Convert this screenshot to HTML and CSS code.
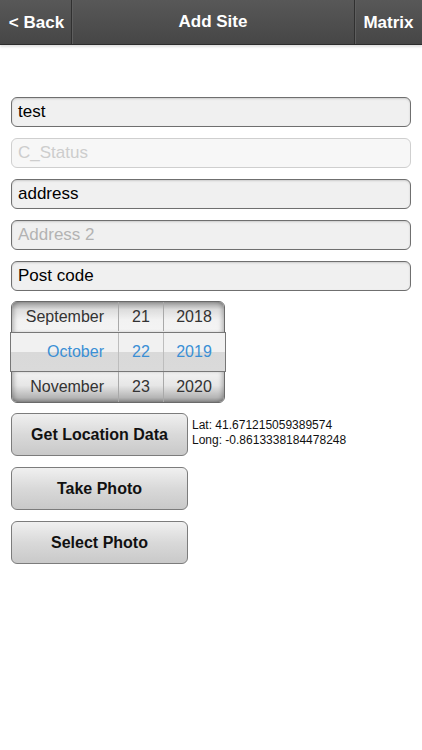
FILE: index.html
```html
<!DOCTYPE html>
<html lang="en">

<head>
    <meta charset="UTF-8">
    <meta name="viewport" content="width=device-width, initial-scale=1.0">
    <title>Add Site</title>
    <link rel="stylesheet" href="styles.css">
</head>

<body>
    <header class="topbar">
        <div class="bar_btn back">&lt; Back</div>
        <div class="bar_title">Add Site</div>
        <div class="bar_btn matrix">Matrix</div>
    </header>

    <div class="form">
        <div class="field">test</div>
        <div class="field disabled">C_Status</div>
        <div class="field">address</div>
        <div class="field placeholder">Address 2</div>
        <div class="field">Post code</div>

        <!-- Date Picker -->
        <div class="picker">
            <div class="prow top">
                <div class="cell month">September</div>
                <div class="cell">21</div>
                <div class="cell">2018</div>
            </div>
            <div class="prow selected">
                <div class="cell month">October</div>
                <div class="cell">22</div>
                <div class="cell">2019</div>
            </div>
            <div class="prow bottom">
                <div class="cell month">November</div>
                <div class="cell">23</div>
                <div class="cell">2020</div>
            </div>
        </div>

        <div class="loc_row">
            <button class="btn">Get Location Data</button>
            <div class="coords">
                Lat: 41.671215059389574<br>
                Long: -0.8613338184478248
            </div>
        </div>
        <button class="btn">Take Photo</button>
        <button class="btn">Select Photo</button>
    </div>
</body>

</html>
```

FILE: styles.css
```css
/* Global Styles */
body {
    font-family: 'Liberation Sans', Arial, sans-serif;
    margin: 0;
    padding: 0;
    background: #fff;
    color: #000;
}

/* Top Bar */
.topbar {
    display: flex;
    height: 44px;
    background: linear-gradient(#585858, #464646);
    border-bottom: 1px solid #2c2c2c;
    box-shadow: 0 2px 2px rgba(0, 0, 0, 0.12);
    color: white;
    font-weight: bold;
    font-size: 17px;
}

.bar_btn {
    display: flex;
    align-items: center;
    justify-content: center;
    padding-top: 2px;
}

.back {
    width: 72px;
    padding-left: 2px;
    box-sizing: border-box;
    border-right: 1px solid #303030;
    box-shadow: 1px 0 0 #5e5e5e;
}

.matrix {
    width: 67px;
    border-left: 1px solid #303030;
    box-shadow: inset 1px 0 0 #5e5e5e;
}

.bar_title {
    flex: 1;
    text-align: center;
    padding-top: 12px;
}

/* Form */
.form {
    display: flex;
    flex-direction: column;
    align-items: flex-start;
    gap: 11px;
    padding: 52px 11px 0;
}

.field {
    box-sizing: border-box;
    width: 400px;
    height: 30px;
    line-height: 28px;
    padding: 0 6px;
    border: 1px solid #6f6f6f;
    border-radius: 6px;
    background: #f0f0f0;
    box-shadow: inset 0 1px 2px rgba(0, 0, 0, 0.15);
    font-size: 17px;
}

.field.disabled {
    border-color: #cfcfcf;
    background: #f7f7f7;
    color: #cdcdcd;
    box-shadow: none;
}

.field.placeholder {
    color: #b3b3b3;
}

/* Date Picker */
.picker {
    box-sizing: border-box;
    width: 214px;
    margin-top: -1px;
    border: 1px solid #6a6a6a;
    border-radius: 6px;
    font-size: 16px;
    color: #333;
}

.prow {
    display: grid;
    grid-template-columns: 106px 45px 61px;
}

.prow .cell {
    display: flex;
    align-items: center;
    justify-content: center;
    border-left: 1px solid #a9a9a9;
}

.prow .cell:first-child {
    border-left: none;
}

.prow .month {
    justify-content: flex-end;
    padding-right: 14px;
}

.top {
    height: 30px;
    padding-bottom: 1px;
    box-sizing: border-box;
    border-radius: 5px 5px 0 0;
    background: linear-gradient(#9a9a9a, #dcdcdc 25%, #f2f2f2 60%, #f4f4f4);
    box-shadow: inset 4px 0 4px -2px rgba(0, 0, 0, 0.25), inset -4px 0 4px -2px rgba(0, 0, 0, 0.25);
}

.bottom {
    height: 30px;
    border-radius: 0 0 5px 5px;
    background: linear-gradient(#f2f2f2, #e6e6e6 45%, #b5b5b5 85%, #8c8c8c);
    box-shadow: inset 4px 0 4px -2px rgba(0, 0, 0, 0.25), inset -4px 0 4px -2px rgba(0, 0, 0, 0.25);
}

.selected {
    height: 38px;
    margin: 0 -2px;
    padding: 0 1px;
    border: 1px solid #777;
    background: linear-gradient(#f1f1f1 50%, #d9d9d9 50%, #dadada);
    color: #3a8fd5;
}

.selected .cell {
    border-left-color: #bdbdbd;
}

/* Buttons */
.btn {
    box-sizing: border-box;
    width: 177px;
    height: 43px;
    padding: 0;
    border: 1px solid #7c7c7c;
    border-radius: 6px;
    background: linear-gradient(#f0f0f0, #d9d9d9 50%, #c9c9c9);
    font-family: 'Liberation Sans', Arial, sans-serif;
    font-weight: bold;
    font-size: 16px;
    color: #111;
}

.loc_row {
    display: flex;
    align-items: flex-start;
    margin-top: -1px;
}

.coords {
    margin: 5px 0 0 4px;
    font-size: 12px;
    line-height: 15px;
    color: #111;
}
```
